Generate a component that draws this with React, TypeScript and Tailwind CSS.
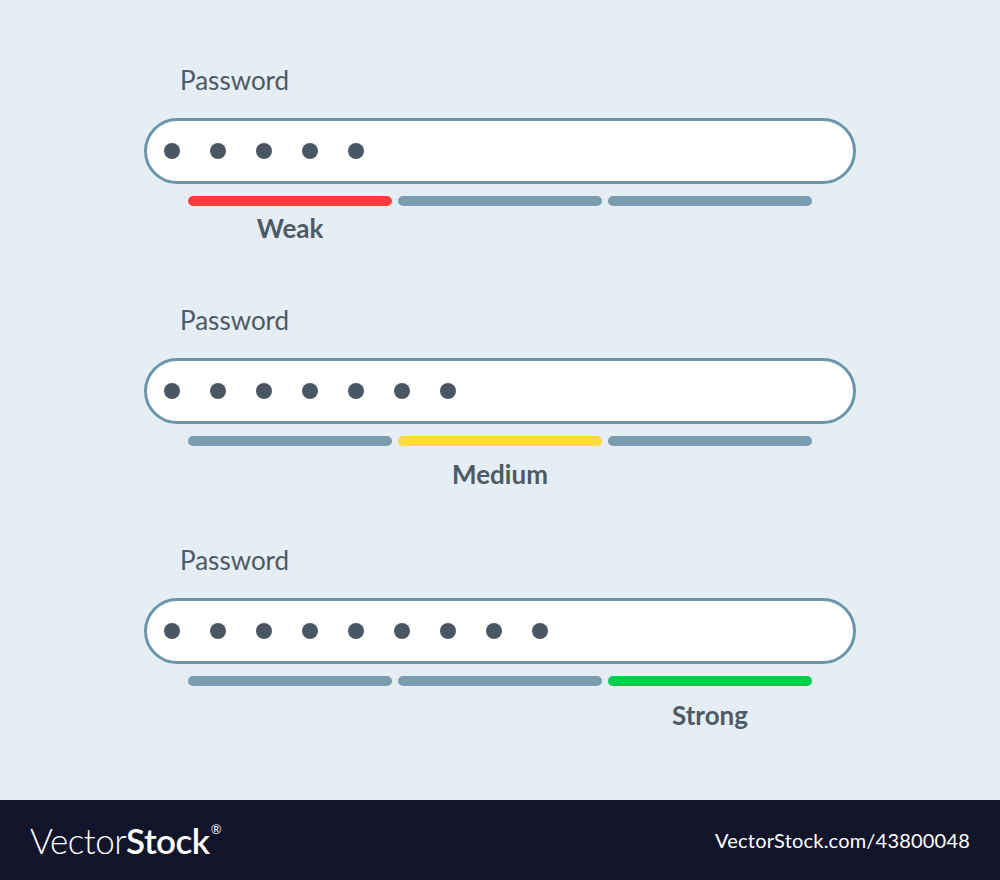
import React from 'react';

type Level = 'weak' | 'medium' | 'strong';

interface StrengthRowProps {
  dots: number;
  level: Level;
  className?: string;
}

const LEVELS: Record<Level, { index: number; label: string; color: string; offset: string }> = {
  weak: { index: 0, label: 'Weak', color: 'bg-[#ff3c3c]', offset: 'pt-[6px]' },
  medium: { index: 1, label: 'Medium', color: 'bg-[#ffd93f]', offset: 'pt-[12px]' },
  strong: { index: 2, label: 'Strong', color: 'bg-[#00cc4e]', offset: 'pt-[13px]' },
};

function StrengthRow({ dots, level, className = '' }: StrengthRowProps) {
  const current = LEVELS[level];

  return (
    <div className={`flex flex-col ${className}`}>
      <label className="pl-[36px] text-[26px] leading-8 text-[#4c5b66]">Password</label>

      <div className="mt-[22px] flex h-[66px] items-center gap-[30px] rounded-full border-[3px] border-[#6b96aa] bg-white pl-[17px]">
        {Array.from({ length: dots }).map((_, i) => (
          <span key={i} className="h-4 w-4 rounded-full bg-[#4a5763]" />
        ))}
      </div>

      <div className="mt-3 grid grid-cols-3 gap-[6px] px-[44px]">
        {[0, 1, 2].map(i => (
          <div
            key={i}
            className={`h-[10px] rounded-full ${i === current.index ? current.color : 'bg-[#7a9db0]'}`}
          />
        ))}
      </div>

      <div className={`grid h-[46px] grid-cols-3 gap-[6px] px-[44px] ${current.offset}`}>
        {[0, 1, 2].map(i => (
          <div key={i} className="text-center text-[26px] font-bold leading-8 text-[#4c5b66]">
            {i === current.index ? current.label : ''}
          </div>
        ))}
      </div>
    </div>
  );
}

export default function App() {
  return (
    <div className="flex h-[880px] w-[1000px] flex-col" style={{ fontFamily: 'Lato, "Open Sans", sans-serif' }}>
      <main className="flex h-[800px] flex-col bg-[#e5eef4] px-[144px] pt-[64px]">
        <StrengthRow dots={5} level="weak" />
        <StrengthRow dots={7} level="medium" className="mt-[52px]" />
        <StrengthRow dots={9} level="strong" className="mt-[52px]" />
      </main>

      <footer className="flex h-[80px] items-center justify-between bg-[#12142a] pl-[30px] pr-[30px] text-white">
        <div className="flex items-start text-[35px] leading-none tracking-[-0.5px]">
          <span className="font-light">Vector</span>
          <span className="font-semibold">Stock</span>
          <span className="ml-[1px] text-[13px] leading-none">®</span>
        </div>
        <span className="text-[20px] tracking-[0.2px]">VectorStock.com/43800048</span>
      </footer>
    </div>
  );
}
